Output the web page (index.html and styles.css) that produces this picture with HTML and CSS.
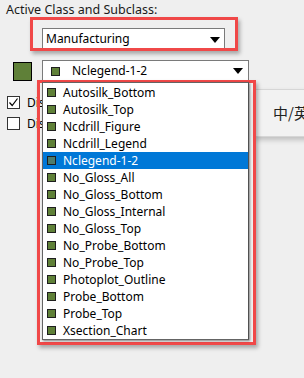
FILE: index.html
```html
<!DOCTYPE html>
<html>
<head>
<meta charset="utf-8">
<link rel="stylesheet" href="styles.css">
</head>
<body>
<div class="page">
  <div class="label">Active Class and Subclass:</div>
  <div class="mark mark-top">
    <div class="combo combo-class">
      <span class="combo-text">Manufacturing</span>
      <span class="arrow"></span>
    </div>
  </div>
  <div class="row-sub">
    <span class="big-swatch"></span>
    <div class="combo combo-sub">
      <span class="sw"></span>
      <span class="combo-text">Nclegend-1-2</span>
      <span class="arrow"></span>
    </div>
  </div>
  <div class="checks">
    <label class="chk"><span class="box checked"><svg width="11" height="11" viewBox="0 0 11 11"><polyline points="1.5,5.5 4.2,8.5 9.5,1.5" fill="none" stroke="#000" stroke-width="1.2"/></svg></span><span>Display</span></label>
    <label class="chk"><span class="box"></span><span>Display</span></label>
  </div>

  <div class="ime">中/英</div>

  <div class="mark mark-list">
    <ul class="list">
      <li><span class="sw"></span>Autosilk_Bottom</li>
      <li><span class="sw"></span>Autosilk_Top</li>
      <li><span class="sw"></span>Ncdrill_Figure</li>
      <li><span class="sw"></span>Ncdrill_Legend</li>
      <li class="sel"><span class="sw"></span>Nclegend-1-2</li>
      <li><span class="sw"></span>No_Gloss_All</li>
      <li><span class="sw"></span>No_Gloss_Bottom</li>
      <li><span class="sw"></span>No_Gloss_Internal</li>
      <li><span class="sw"></span>No_Gloss_Top</li>
      <li><span class="sw"></span>No_Probe_Bottom</li>
      <li><span class="sw"></span>No_Probe_Top</li>
      <li><span class="sw"></span>Photoplot_Outline</li>
      <li><span class="sw"></span>Probe_Bottom</li>
      <li><span class="sw"></span>Probe_Top</li>
      <li><span class="sw"></span>Xsection_Chart</li>
    </ul>
  </div>
</div>
</body>
</html>
```

FILE: styles.css
```css
html, body {
  margin: 0;
  padding: 0;
  background: #efefef;
}
.page {
  position: relative;
  width: 304px;
  height: 378px;
  overflow: hidden;
  font-family: "Noto Sans", "Open Sans", sans-serif;
  font-size: 12px;
  color: #000;
}
.label {
  padding: 2px 0 0 6px;
  height: 15px;
  line-height: 15px;
  font-size: 12.5px;
  color: #1a1a1a;
}
.mark {
  border: 3px solid #f04848;
  box-shadow: 2px 3px 4px rgba(0, 0, 0, 0.3);
}
.mark-top {
  margin: 0 0 0 30px;
  width: 202px;
  height: 28px;
  padding: 0;
  box-sizing: content-box;
  overflow: hidden;
}
.combo {
  background: #fff;
  border: 1px solid #7a7a7a;
  box-sizing: border-box;
  display: flex;
  align-items: center;
  position: relative;
}
.combo-class {
  margin: 8px 0 0 9px;
  width: 183px;
  height: 22px;
  padding-left: 3px;
}
.combo-text {
  font-size: 12px;
  line-height: 18px;
}
.arrow {
  position: absolute;
  width: 0;
  height: 0;
  border-left: 5.5px solid transparent;
  border-right: 5.5px solid transparent;
  border-top: 6px solid #000;
}
.combo-class .arrow {
  right: 4px;
  top: 8px;
}
.row-sub {
  display: flex;
  align-items: flex-start;
  margin-top: 9px;
}
.big-swatch {
  width: 19px;
  height: 19px;
  box-sizing: border-box;
  border: 1px solid #000;
  background: #5f8038;
  margin: 2px 0 0 13px;
}
.combo-sub {
  margin-left: 10px;
  width: 207px;
  height: 22px;
  padding-left: 8px;
}
.combo-sub .sw {
  margin-right: 12px;
}
.combo-sub .arrow {
  right: 5px;
  top: 7px;
}
.sw {
  display: inline-block;
  width: 9px;
  height: 9px;
  box-sizing: border-box;
  border: 1px solid #1e1e1e;
  background: #5f8038;
  flex: none;
}
.checks {
  display: flex;
  flex-direction: column;
  gap: 8px;
  margin: 14px 0 0 7px;
}
.chk {
  display: flex;
  align-items: center;
  gap: 7px;
  height: 13px;
  font-size: 12px;
}
.box {
  width: 13px;
  height: 13px;
  box-sizing: border-box;
  border: 1px solid #333;
  background: #fff;
  display: flex;
  align-items: center;
  justify-content: center;
}
.box svg {
  display: block;
}
.ime {
  position: absolute;
  left: 255px;
  top: 89px;
  width: 80px;
  height: 48px;
  box-sizing: border-box;
  border: 1px solid #d6d6d6;
  background: #f2f2f2;
  box-shadow: 0 3px 5px rgba(0, 0, 0, 0.2);
  padding-left: 17px;
  line-height: 46px;
  font-family: "Noto Sans CJK SC", sans-serif;
  font-size: 15px;
  color: #222;
}
.mark-list {
  position: absolute;
  left: 37px;
  top: 80px;
  width: 213px;
  height: 259px;
  z-index: 2;
}
.list {
  list-style: none;
  margin: 0;
  position: absolute;
  left: 2px;
  top: -1px;
  width: 207px;
  height: 258px;
  box-sizing: border-box;
  border: 1px solid #646464;
  border-right-color: #505050;
  background: #fff;
  padding: 1px 0 0 0;
  box-shadow: 1px 1px 2px rgba(0, 0, 0, 0.45);
}
.list li {
  height: 17px;
  display: flex;
  align-items: center;
  padding-left: 4px;
  font-size: 12px;
  line-height: 17px;
  gap: 7px;
}
.list li.sel {
  background: #0078d7;
  color: #fff;
}
.list li.sel .sw {
  background: #4d7c6c;
}
```
